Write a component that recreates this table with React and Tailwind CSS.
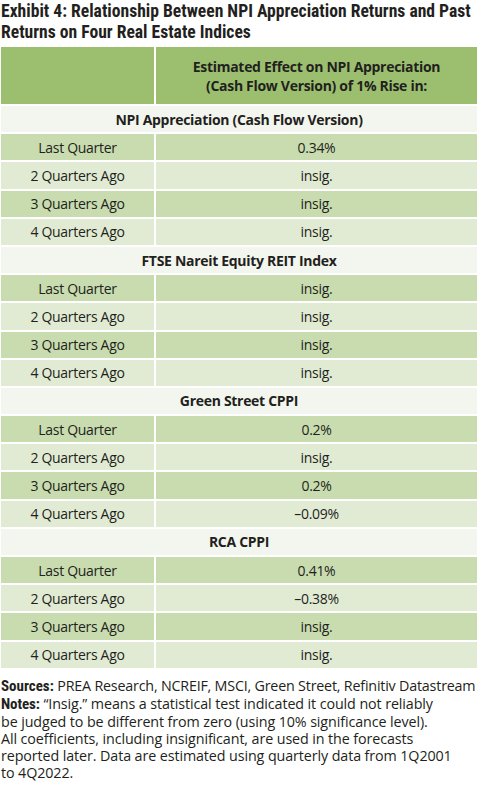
import React from "react";

const sections = [
  { title: "NPI Appreciation (Cash Flow Version)", vals: ["0.34%", "insig.", "insig.", "insig."] },
  { title: "FTSE Nareit Equity REIT Index", vals: ["insig.", "insig.", "insig.", "insig."] },
  { title: "Green Street CPPI", vals: ["0.2%", "insig.", "0.2%", "\u20130.09%"] },
  { title: "RCA CPPI", vals: ["0.41%", "\u20130.38%", "insig.", "insig."] },
];
const labels = ["Last Quarter", "2 Quarters Ago", "3 Quarters Ago", "4 Quarters Ago"];
const cond = { fontFamily: '"Liberation Sans Narrow", "Roboto Condensed", "Open Sans", sans-serif' };

export default function App() {
  return (
    <div className="w-[479px] h-[787px] bg-white text-[#231f20] overflow-hidden" style={{ fontFamily: '"Open Sans", "Liberation Sans", sans-serif' }}>
      <div className="pl-[1px] pt-[1px] text-[17.6px] leading-[21px] font-bold tracking-[0px] whitespace-nowrap" style={cond}>
        Exhibit 4: Relationship Between NPI Appreciation Returns and Past<br />Returns on Four Real Estate Indices
      </div>
      <div className="mt-[4px] ml-[1px] w-[476px] flex flex-col gap-[2px] text-[14px] tracking-[-0.3px]">
        <div className="flex gap-[2px] h-[57px]">
          <div className="w-[153px] bg-[#9bbf6e]" />
          <div className="flex-1 bg-[#9bbf6e] flex items-center justify-center text-center font-bold text-[14px] leading-[19px] pt-[1px]">
            Estimated Effect on NPI Appreciation<br />(Cash Flow Version) of 1% Rise in:
          </div>
        </div>
        {sections.map((s) => (
          <React.Fragment key={s.title}>
            <div className="h-[26.2px] bg-[#f3f6ee] flex items-center justify-center font-bold">{s.title}</div>
            {s.vals.map((v, i) => (
              <div key={i} className="flex gap-[2px] h-[26.2px]">
                <div className={"w-[153px] flex items-center justify-center " + (i % 2 === 0 ? "bg-[#c8dcaf]" : "bg-[#e1ebd4]")}>{labels[i]}</div>
                <div className={"flex-1 flex items-center justify-center " + (i % 2 === 0 ? "bg-[#c8dcaf]" : "bg-[#e1ebd4]")}>{v}</div>
              </div>
            ))}
          </React.Fragment>
        ))}
      </div>
      <div className="mt-[9px] pl-[1px] text-[14.3px] leading-[17px] tracking-[-0.1px] whitespace-nowrap">
        <div className="tracking-[-0.2px]">
          <span className="font-bold text-[15px] tracking-[0px]" style={cond}>Sources:</span> PREA Research, NCREIF, MSCI, Green Street, Refinitiv Datastream
        </div>
        <div><span className="font-bold text-[15px]" style={cond}>Notes:</span> {"\u201cInsig.\u201d"} means a statistical test indicated it could not reliably</div>
        <div>be judged to be different from zero (using 10% significance level).</div>
        <div>All coefficients, including insignificant, are used in the forecasts</div>
        <div>reported later. Data are estimated using quarterly data from 1Q2001</div>
        <div>to 4Q2022.</div>
      </div>
    </div>
  );
}
